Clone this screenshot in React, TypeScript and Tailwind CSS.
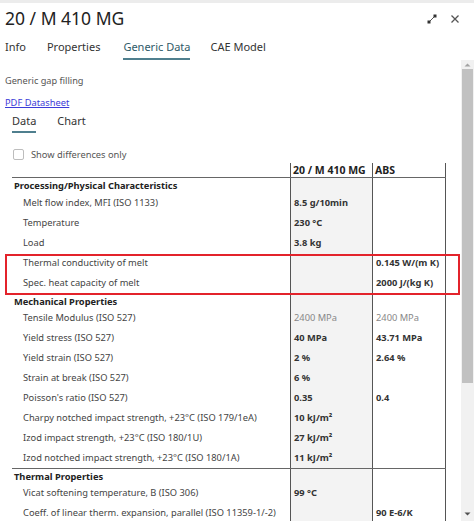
import React from "react";

type Row =
  | { kind: "section"; label: string }
  | { kind: "row"; label: string; a?: string; b?: string; light?: boolean };

const rows: Row[] = [
  { kind: "section", label: "Processing/Physical Characteristics" },
  { kind: "row", label: "Melt flow index, MFI (ISO 1133)", a: "8.5 g/10min" },
  { kind: "row", label: "Temperature", a: "230 °C" },
  { kind: "row", label: "Load", a: "3.8 kg" },
  { kind: "row", label: "Thermal conductivity of melt", b: "0.145 W/(m K)" },
  { kind: "row", label: "Spec. heat capacity of melt", b: "2000 J/(kg K)" },
  { kind: "section", label: "Mechanical Properties" },
  { kind: "row", label: "Tensile Modulus (ISO 527)", a: "2400 MPa", b: "2400 MPa", light: true },
  { kind: "row", label: "Yield stress (ISO 527)", a: "40 MPa", b: "43.71 MPa" },
  { kind: "row", label: "Yield strain (ISO 527)", a: "2 %", b: "2.64 %" },
  { kind: "row", label: "Strain at break (ISO 527)", a: "6 %" },
  { kind: "row", label: "Poisson's ratio (ISO 527)", a: "0.35", b: "0.4" },
  { kind: "row", label: "Charpy notched impact strength, +23°C (ISO 179/1eA)", a: "10 kJ/m²" },
  { kind: "row", label: "Izod impact strength, +23°C (ISO 180/1U)", a: "27 kJ/m²" },
  { kind: "row", label: "Izod notched impact strength, +23°C (ISO 180/1A)", a: "11 kJ/m²" },
  { kind: "section", label: "Thermal Properties" },
  { kind: "row", label: "Vicat softening temperature, B (ISO 306)", a: "99 °C" },
  { kind: "row", label: "Coeff. of linear therm. expansion, parallel (ISO 11359-1/-2)", b: "90 E-6/K" },
];

function ExpandIcon() {
  return (
    <svg width="10" height="10" viewBox="0 0 10 10">
      <line x1="2" y1="8" x2="8" y2="2" stroke="#555" strokeWidth="1" />
      <rect x="0.5" y="6.5" width="3" height="3" fill="#333" />
      <rect x="6.5" y="0.5" width="3" height="3" fill="#333" />
    </svg>
  );
}

function CloseIcon() {
  return (
    <svg width="10" height="10" viewBox="0 0 10 10">
      <path d="M1.5 1.5 L8.5 8.5 M8.5 1.5 L1.5 8.5" stroke="#555" strokeWidth="1.3" />
    </svg>
  );
}

export default function App() {
  let sectionIndex = -1;
  return (
    <div
      className="relative w-[474px] h-[521px] overflow-hidden bg-white text-[#333]"
      style={{ fontFamily: '"Noto Sans", "Open Sans", sans-serif' }}
    >
      <div className="h-[3px] bg-[#ececec]" />
      {/* Title */}
      <div className="flex items-center h-[31px] pl-[5px] pr-[14px]">
        <div className="text-[17.5px] leading-none text-[#222]">20 / M 410 MG</div>
        <div className="ml-auto flex items-center gap-[13px] mt-[1px]">
          <ExpandIcon />
          <CloseIcon />
        </div>
      </div>
      {/* Tabs */}
      <div className="flex items-end h-[26px] pl-[5px] text-[11px] text-[#333]">
        <div className="pb-[5px]">Info</div>
        <div className="pb-[5px] ml-[21px]">Properties</div>
        <div className="pb-[3px] ml-[23px] border-b-2 border-[#4f7f8e] text-[#2f5a68]">Generic Data</div>
        <div className="pb-[5px] ml-[20px]">CAE Model</div>
      </div>
      {/* Body with scrollbar */}
      <div className="flex h-[461px]">
        <div className="flex-1 relative">
          <div className="pl-[5px] pt-[14px] text-[9.2px] text-[#555] leading-[14px]">Generic gap filling</div>
          <div className="pl-[5px] pt-[8px] text-[9.3px] leading-[14px]">
            <span className="text-[#3c3cd8] underline">PDF Datasheet</span>
          </div>
          <div className="flex pl-[12px] pt-[3px] text-[11px] text-[#333]">
            <div className="pb-[2px] border-b-2 border-[#4f7f8e] leading-[16px]">Data</div>
            <div className="ml-[21px] leading-[16px]">Chart</div>
          </div>
          <div className="flex items-center pl-[13px] pt-[13px] h-[30px]">
            <div className="w-[11px] h-[11px] border border-[#bdbdbd] rounded-[2px] bg-white" />
            <div className="ml-[7px] text-[9.3px] text-[#555]">Show differences only</div>
          </div>
          {/* Table */}
          <div className="ml-[12px] w-[434px] text-[9.3px]">
            <div className="grid grid-cols-[278px_82px_74px] h-[15px] border-b border-[#666]">
              <div />
              <div className="border-l border-[#555] pl-[2px] font-bold text-[#222] leading-[14px] text-[10.5px]">20 / M 410 MG</div>
              <div className="border-l border-r border-[#555] pl-[2px] font-bold text-[#222] leading-[14px] text-[10.5px]">ABS</div>
            </div>
            {rows.map((r, i) => {
              if (r.kind === "section") {
                sectionIndex++;
                return (
                  <div
                    key={i}
                    className={`grid grid-cols-[278px_82px_74px] h-[15px] ${sectionIndex > 0 ? "border-t border-[#666]" : ""}`}
                  >
                    <div className="pl-[2px] font-bold text-[#222] leading-[15px]">{r.label}</div>
                    <div className="border-l border-[#555] bg-[#f3f3f3]" />
                    <div className="border-l border-r border-[#555]" />
                  </div>
                );
              }
              return (
                <div key={i} className="grid grid-cols-[278px_82px_74px] h-[20px]">
                  <div className="pl-[11px] text-[#444] leading-[20px] whitespace-nowrap overflow-hidden">{r.label}</div>
                  <div
                    className={`border-l border-[#555] bg-[#f3f3f3] pl-[3px] leading-[20px] whitespace-nowrap ${r.light ? "text-[#888]" : "font-bold text-[#333]"}`}
                  >
                    {r.a ?? ""}
                  </div>
                  <div
                    className={`border-l border-r border-[#555] pl-[3px] leading-[20px] whitespace-nowrap ${r.light ? "text-[#888]" : "font-bold text-[#333]"}`}
                  >
                    {r.b ?? ""}
                  </div>
                </div>
              );
            })}
          </div>
        </div>
        {/* Scrollbar */}
        <div className="w-[13px] flex flex-col bg-[#f1f1f1]">
          <div className="h-[9px] flex items-center justify-center">
            <svg width="7" height="4" viewBox="0 0 7 4">
              <path d="M0.5 3.5 L3.5 0.5 L6.5 3.5 Z" fill="#a3a3a3" />
            </svg>
          </div>
          <div className="mx-[1px] h-[314px] bg-[#c1c1c1]" />
          <div className="flex-1" />
          <div className="h-[14px] flex items-center justify-center">
            <svg width="7" height="4" viewBox="0 0 7 4">
              <path d="M0.5 0.5 L3.5 3.5 L6.5 0.5 Z" fill="#505050" />
            </svg>
          </div>
        </div>
      </div>
      {/* Red annotation box */}
      <div className="absolute left-[5px] top-[254px] w-[455px] h-[41px] border-2 border-[#e3232b] pointer-events-none" />
    </div>
  );
}
